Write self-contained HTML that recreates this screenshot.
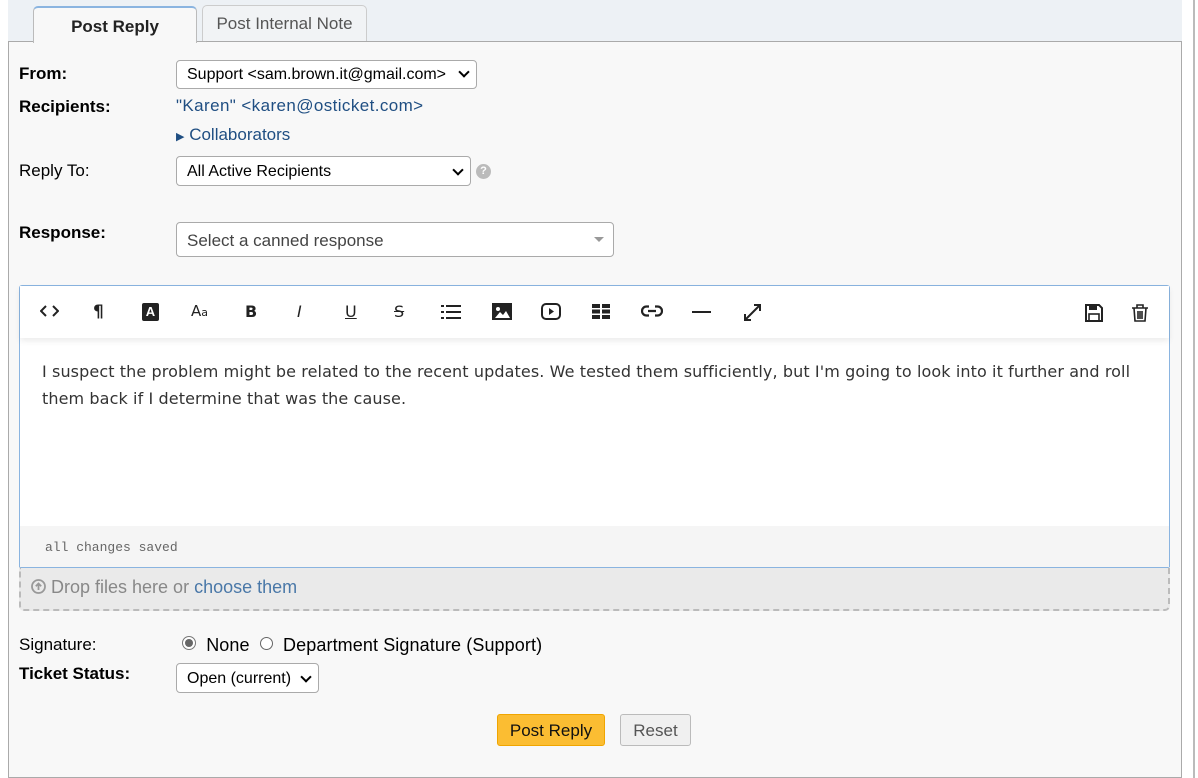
<!DOCTYPE html>
<html><head><meta charset="utf-8"><style>
*{box-sizing:border-box}
body{margin:0;width:1198px;height:778px;background:#fff;font-family:"Liberation Sans",sans-serif;font-size:17px;color:#000;position:relative;overflow:hidden}
.top{position:absolute;left:8px;top:0;width:1174px;height:42px;background:#edf1f5}
.panel{position:absolute;left:8px;top:41px;width:1174px;height:737px;background:#f8f8f8;border:1px solid #aaa}
.sb{position:absolute;left:1193px;top:0;width:2px;height:778px;background:#bbb}
.tab{position:absolute;font-size:17px;text-align:center}
.t1{left:33px;top:6px;width:164px;height:37px;background:#f8f8f8;border:1px solid #bbb;border-top:2px solid #8ab4e0;border-bottom:none;border-radius:5px 5px 0 0;font-weight:bold;color:#222;padding-top:9px;z-index:2}
.t2{left:202px;top:5px;width:165px;height:36px;background:#f1f3f5;border:1px solid #ccc;border-bottom:none;border-radius:5px 5px 0 0;color:#555;padding-top:8px}
.lbl{position:absolute;left:19px;font-size:17px}
.b{font-weight:bold}
.sel{position:absolute;background:#fff;border:1px solid #aaa;border-radius:4px;font-size:16px;padding:6px 0 0 10px;color:#000}
.chev{position:absolute;right:8px;top:9px;width:8px;height:8px;border-right:2px solid #000;border-bottom:2px solid #000;transform:rotate(45deg)}
.link{position:absolute;color:#1f4e82;font-size:17px}
.ed{position:absolute;left:19px;top:285px;width:1151px;height:282px;border:1px solid #8ab4e0;border-bottom:none;border-radius:3px 3px 0 0;background:#fff}
.tb{position:absolute;left:0;top:0;width:1149px;height:52px;background:#fff;box-shadow:0 3px 6px rgba(0,0,0,.08)}
.ic{position:absolute;top:16px;font-family:"DejaVu Sans",sans-serif;font-size:16px;color:#222}
.txt{position:absolute;left:22px;top:72px;font-family:"DejaVu Sans",sans-serif;font-size:16px;color:#333;line-height:27px;white-space:nowrap;letter-spacing:0.1px}
.status{position:absolute;left:0;top:240px;width:1149px;height:42px;background:#f5f5f5;font-family:"Liberation Mono",monospace;font-size:13px;color:#666;padding:14px 0 0 25px}
.drop{position:absolute;left:19px;top:567px;width:1151px;height:44px;background:#eaeaea;border:2px dashed #bbb;border-top:1px solid #8ab4e0;border-radius:0 0 5px 5px;color:#888;font-size:18px;padding:9px 0 0 10px}
.btn{position:absolute;top:714px;height:32px;border-radius:3px;font-size:17px;text-align:center;padding-top:6px}
</style></head><body>
<div class="top"></div>
<div class="sb"></div>
<div class="panel"></div>
<div class="tab t1">Post Reply</div>
<div class="tab t2">Post Internal Note</div>

<div class="lbl b" style="top:64px">From:</div>
<div class="sel" style="left:176px;top:60px;width:301px;height:29px;padding-top:5px">Support &lt;sam.brown.it@gmail.com&gt;<span class="chev" style="top:7px"></span></div>
<div class="lbl b" style="top:97px">Recipients:</div>
<div class="link" style="left:176px;top:96px;letter-spacing:0.4px">"Karen" &lt;karen@osticket.com&gt;</div>
<div class="link" style="left:176px;top:125px"><span style="font-size:11px;color:#1f4e82">&#9654;</span> Collaborators</div>
<div class="lbl" style="top:161px">Reply To:</div>
<div class="sel" style="left:176px;top:156px;width:295px;height:30px">All Active Recipients<span class="chev"></span></div>
<div style="position:absolute;left:476px;top:164px;width:15px;height:15px;border-radius:50%;background:#bbb;color:#fff;font-size:11px;font-weight:bold;text-align:center;line-height:15px">?</div>
<div class="lbl b" style="top:223px">Response:</div>
<div class="sel" style="left:176px;top:222px;width:438px;height:35px;padding-top:8px;color:#444;font-size:17px">Select a canned response<span style="position:absolute;right:9px;top:14px;border:5px solid transparent;border-top:5px solid #999"></span></div>

<div class="ed">
 <div class="tb">
  <svg style="position:absolute;left:20px;top:19px" width="19" height="12"><path d="M6 1L1 6l5 5M13 1l5 5-5 5" fill="none" stroke="#222" stroke-width="2"/></svg>
  <div class="ic" style="left:73px;font-weight:bold;font-size:17px">¶</div>
  <div style="position:absolute;left:122px;top:17px;width:17px;height:18px;background:#222;color:#fff;font-size:13px;font-weight:bold;text-align:center;border-radius:2px;line-height:18px">A</div>
  <div class="ic" style="left:171px;font-size:15px">A<span style="font-size:11px">a</span></div>
  <div class="ic" style="left:225px;font-weight:bold">B</div>
  <div class="ic" style="left:277px;font-style:italic">I</div>
  <div class="ic" style="left:325px;text-decoration:underline">U</div>
  <div class="ic" style="left:374px;text-decoration:line-through">S</div>
  <svg style="position:absolute;left:421px;top:19px" width="20" height="14"><g fill="#222"><rect x="0" y="0" width="3" height="2"/><rect x="5" y="0" width="15" height="2"/><rect x="0" y="6" width="3" height="2"/><rect x="5" y="6" width="15" height="2"/><rect x="0" y="12" width="3" height="2"/><rect x="5" y="12" width="15" height="2"/></g></svg>
  <svg style="position:absolute;left:472px;top:17px" width="20" height="17"><rect width="20" height="17" fill="#222"/><circle cx="6" cy="6" r="2" fill="#fff"/><path d="M3 15l5-6 3 3 3-4 4 7z" fill="#fff"/></svg>
  <svg style="position:absolute;left:521px;top:17px" width="20" height="17"><rect x="1" y="1" width="18" height="15" rx="4" fill="none" stroke="#222" stroke-width="2"/><path d="M8 5l5 3.5-5 3.5z" fill="#222"/></svg>
  <svg style="position:absolute;left:572px;top:18px" width="18" height="15"><g fill="#222"><rect x="0" y="0" width="8" height="4"/><rect x="10" y="0" width="8" height="4"/><rect x="0" y="5.5" width="8" height="4"/><rect x="10" y="5.5" width="8" height="4"/><rect x="0" y="11" width="8" height="4"/><rect x="10" y="11" width="8" height="4"/></g></svg>
  <svg style="position:absolute;left:621px;top:19px" width="22" height="12"><path d="M8 1.5H5.5a4.5 4.5 0 0 0 0 9H8M14 1.5h2.5a4.5 4.5 0 0 1 0 9H14M7 6h8" fill="none" stroke="#222" stroke-width="2.2"/></svg>
  <div style="position:absolute;left:672px;top:25px;width:19px;height:2px;background:#222"></div>
  <svg style="position:absolute;left:723px;top:17px" width="19" height="19"><path d="M2 17L17 2M11 2h6v6M2 11v6h6" fill="none" stroke="#222" stroke-width="2"/></svg>
  <svg style="position:absolute;left:1065px;top:18px" width="18" height="18"><path d="M1 1h13l3 3v13H1z" fill="none" stroke="#222" stroke-width="2"/><rect x="4" y="1" width="8" height="5" fill="#222"/><rect x="4" y="10" width="10" height="7" fill="none" stroke="#222" stroke-width="1.6"/></svg>
  <svg style="position:absolute;left:1112px;top:18px" width="16" height="18"><path d="M0 4h16M5 4V1h6v3M2 4l1 13h10l1-13M6 7v8M8 7v8M10 7v8" fill="none" stroke="#222" stroke-width="1.6"/></svg>
 </div>
 <div class="txt">I suspect the problem might be related to the recent updates. We tested them sufficiently, but I'm going to look into it further and roll<br>them back if I determine that was the cause.</div>
 <div class="status">all changes saved</div>
</div>
<div class="drop"><svg width="15" height="15" style="vertical-align:-1px"><circle cx="7.5" cy="7.5" r="6.5" fill="none" stroke="#999" stroke-width="1.8"/><path d="M7.5 11V4.5M4.8 7.2l2.7-2.7 2.7 2.7" fill="none" stroke="#999" stroke-width="1.8"/></svg> Drop files here or <span style="color:#4a78a8">choose them</span></div>

<div class="lbl" style="top:635px">Signature:</div>
<div style="position:absolute;left:182px;top:635px;font-size:18px;letter-spacing:0.1px"><span style="display:inline-block;width:14px;height:14px;border:1px solid #777;border-radius:50%;vertical-align:1px;position:relative;background:#fff"><span style="position:absolute;left:2px;top:2px;width:8px;height:8px;border-radius:50%;background:#666"></span></span>&nbsp; None &nbsp;<span style="display:inline-block;width:13px;height:13px;border:1px solid #666;border-radius:50%;vertical-align:1px;background:#fff"></span>&nbsp; Department Signature (Support)</div>
<div class="lbl b" style="top:664px">Ticket Status:</div>
<div class="sel" style="left:176px;top:663px;width:143px;height:30px">Open (current)<span class="chev"></span></div>

<div class="btn" style="left:497px;width:108px;background:#fbbd32;border:1px solid #f0a500;color:#111">Post Reply</div>
<div class="btn" style="left:620px;width:71px;background:#f0f0f0;border:1px solid #bbb;color:#555">Reset</div>
</body></html>
